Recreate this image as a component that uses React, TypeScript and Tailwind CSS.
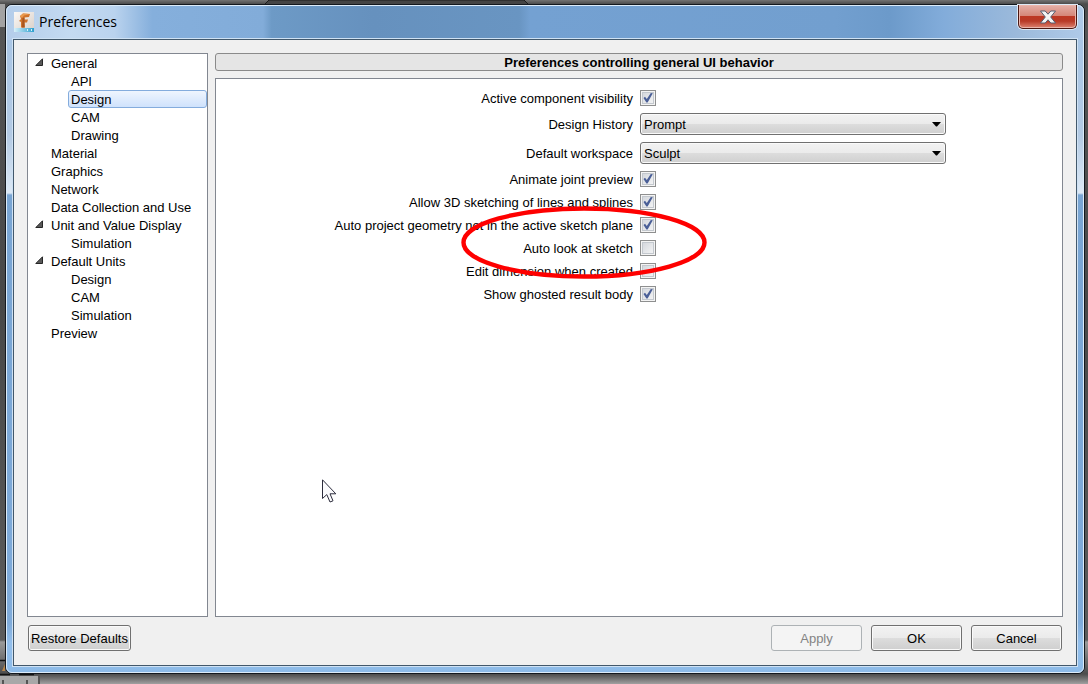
import { useState } from "react";
import clsx from "clsx";

interface TreeNode {
  id: string;
  label: string;
  level: 0 | 1;
  parent?: boolean;
}

interface CheckSetting {
  kind: "check";
  id: string;
  label: string;
  checked: boolean;
}

interface SelectSetting {
  kind: "select";
  id: string;
  label: string;
  options: string[];
}

const TREE: TreeNode[] = [
  { id: "general", label: "General", level: 0, parent: true },
  { id: "general-api", label: "API", level: 1 },
  { id: "general-design", label: "Design", level: 1 },
  { id: "general-cam", label: "CAM", level: 1 },
  { id: "general-drawing", label: "Drawing", level: 1 },
  { id: "material", label: "Material", level: 0 },
  { id: "graphics", label: "Graphics", level: 0 },
  { id: "network", label: "Network", level: 0 },
  { id: "data", label: "Data Collection and Use", level: 0 },
  { id: "display", label: "Unit and Value Display", level: 0, parent: true },
  { id: "display-simulation", label: "Simulation", level: 1 },
  { id: "units", label: "Default Units", level: 0, parent: true },
  { id: "units-design", label: "Design", level: 1 },
  { id: "units-cam", label: "CAM", level: 1 },
  { id: "units-simulation", label: "Simulation", level: 1 },
  { id: "preview", label: "Preview", level: 0 },
];

const SETTINGS: (CheckSetting | SelectSetting)[] = [
  { kind: "check", id: "visibility", label: "Active component visibility", checked: true },
  { kind: "select", id: "history", label: "Design History", options: ["Prompt"] },
  { kind: "select", id: "workspace", label: "Default workspace", options: ["Sculpt"] },
  { kind: "check", id: "joint", label: "Animate joint preview", checked: true },
  { kind: "check", id: "sketch3d", label: "Allow 3D sketching of lines and splines", checked: true },
  { kind: "check", id: "project", label: "Auto project geometry not in the active sketch plane", checked: true },
  { kind: "check", id: "look", label: "Auto look at sketch", checked: false },
  { kind: "check", id: "dimension", label: "Edit dimension when created", checked: false },
  { kind: "check", id: "ghosted", label: "Show ghosted result body", checked: true },
];

function AppLogo() {
  return (
    <svg width="20" height="20" viewBox="0 0 20 20" aria-hidden="true">
      <defs>
        <linearGradient id="logo-bg" x1="0" y1="0" x2="1" y2="1">
          <stop offset="0" stopColor="#fbf8f5" />
          <stop offset="1" stopColor="#d9cfc8" />
        </linearGradient>
        <linearGradient id="logo-bar" x1="0" y1="0" x2="1" y2="0">
          <stop offset="0" stopColor="#d8f0fa" />
          <stop offset="1" stopColor="#2d9fcd" />
        </linearGradient>
      </defs>
      <rect width="20" height="20" fill="url(#logo-bg)" />
      <path d="M6 4 L9 1.5 L16 2 L15 5 L10.5 5.5 L10.5 7.5 L14 7.5 L13 10.5 L10.5 10.5 L11 15.5 L7 15.5 L7 10 L5 9 L7 7 Z" fill="#d0732b" />
      <path d="M6 4 L9 1.5 L16 2 L10 3.5 L8 6 Z" fill="#e99a50" />
      <path d="M8.5 6 L10.5 5.5 L10.5 15.5 L8 15.5 Z" fill="#a9561f" />
      <rect y="16" width="20" height="4" fill="url(#logo-bar)" />
      <path d="M13.5 17v2M17.5 17v2" stroke="#d8f0fa" />
    </svg>
  );
}

function TitleBar() {
  return (
    <header className="flex h-8 items-start">
      <div className="flex flex-1 items-center gap-1 pl-0.5 pt-[6px]">
        <AppLogo />
        <h1 className="px-px font-['Open_Sans','Noto_Sans',sans-serif] text-[14px] leading-5 text-black">
          Preferences
        </h1>
      </div>
      <button
        type="button"
        aria-label="Close"
        className="-mt-px mr-px flex h-6 w-[59px] items-center justify-center rounded-b-[5px] border border-t-0 border-[#4c1813] bg-[linear-gradient(#e4b0a8_0%,#d58577_48%,#bd3723_50%,#b83a27_70%,#dd8472_100%)] shadow-[0_0_0_1px_#dce9f6,inset_0_0_0_1px_#eab5ab]"
      >
        <svg width="18" height="14" viewBox="0 0 18 14" aria-hidden="true">
          <path
            d="M1.5 1 H6.2 L9 4.2 L11.8 1 H16.5 L11.7 7 L16.5 13 H11.8 L9 9.8 L6.2 13 H1.5 L6.3 7 Z"
            fill="#f4f4f4"
            stroke="#565e72"
            strokeLinejoin="round"
          />
        </svg>
      </button>
    </header>
  );
}

function CategoryTree() {
  const [selected, setSelected] = useState("general-design");

  return (
    <nav className="w-[181px] shrink-0 border border-[#828790] bg-white">
      <ul>
        {TREE.map((node) => (
          <li key={node.id} className={clsx("flex h-[18px]", node.level === 1 && "pl-10")}>
            {node.level === 0 && (
              <span className="flex w-5 shrink-0 justify-end pr-[4px] pt-[4px]">
                {node.parent && (
                  <svg width="9" height="9" viewBox="0 0 9 9" aria-hidden="true">
                    <path d="M7.5 0.8 V7.5 H0.8 Z" fill="#595959" stroke="#262626" />
                  </svg>
                )}
              </span>
            )}
            <button
              type="button"
              onClick={() => setSelected(node.id)}
              className={clsx(
                "flex-1 whitespace-nowrap rounded-[3px] border px-[2px] pt-0.5 text-left leading-[14px]",
                node.id === selected
                  ? "border-[#84acdd] bg-linear-to-b from-[#eff5fe] to-[#cfe2fc]"
                  : "border-transparent"
              )}
            >
              {node.label}
            </button>
          </li>
        ))}
      </ul>
    </nav>
  );
}

function CheckField({ setting }: { setting: CheckSetting }) {
  const [checked, setChecked] = useState(setting.checked);

  return (
    <span className="grid size-4">
      <input
        id={setting.id}
        type="checkbox"
        checked={checked}
        onChange={() => setChecked(!checked)}
        className="col-start-1 row-start-1 size-4 appearance-none border border-[#8e8f8f] bg-linear-to-br from-[#cfd3d9] to-[#f8f8f8] shadow-[inset_0_0_0_1px_#f4f4f4,inset_0_0_0_2px_#c3c8ce]"
      />
      {checked && (
        <svg
          className="pointer-events-none col-start-1 row-start-1"
          width="16"
          height="16"
          viewBox="0 0 16 16"
          aria-hidden="true"
        >
          <path d="M3.5 8 L5 6.8 L6.8 9 L10.8 3 L12.8 3.2 L7.6 12.5 L6.4 12.5 Z" fill="#4a5f97" />
        </svg>
      )}
    </span>
  );
}

function SelectField({ setting }: { setting: SelectSetting }) {
  return (
    <span className="grid w-[306px]">
      <select
        id={setting.id}
        className="col-start-1 row-start-1 h-[22px] appearance-none rounded-[3px] border border-[#707070] bg-[linear-gradient(#f2f2f2_0%,#ebebeb_49%,#dddddd_50%,#cfcfcf_100%)] px-[3px] pt-0.5 leading-[18px] shadow-[inset_0_0_0_1px_#fafafa]"
      >
        {setting.options.map((option) => (
          <option key={option}>{option}</option>
        ))}
      </select>
      <svg
        className="pointer-events-none col-start-1 row-start-1 mr-[5px] self-center justify-self-end"
        width="9"
        height="5"
        viewBox="0 0 9 5"
        aria-hidden="true"
      >
        <path d="M0 0 H9 L5 4.5 H4 Z" fill="#000" />
      </svg>
    </span>
  );
}

function SettingsPanel() {
  return (
    <section className="relative flex-1 border border-[#828790] bg-white pt-[11px]">
      <div className="grid grid-cols-2 gap-y-[7px]">
        {SETTINGS.map((setting) => (
          <div key={setting.id} className="col-span-2 grid grid-cols-subgrid items-center">
            <label htmlFor={setting.id} className="pt-0.5 pr-1.5 text-right leading-[14px] whitespace-nowrap">
              {setting.label}
            </label>
            <div className="pl-px">
              {setting.kind === "check" ? <CheckField setting={setting} /> : <SelectField setting={setting} />}
            </div>
          </div>
        ))}
      </div>

      {/* hand-drawn mark around the sketch option */}
      <svg
        className="pointer-events-none absolute left-1/2 top-[127px] -ml-[178px]"
        width="246"
        height="74"
        viewBox="0 0 246 74"
        aria-hidden="true"
      >
        <ellipse cx="123" cy="36.5" rx="120.5" ry="34" fill="none" stroke="#fe0000" strokeWidth="4.4" />
      </svg>

      {/* mouse pointer */}
      <svg
        className="pointer-events-none absolute left-[106px] top-[400px]"
        width="16"
        height="25"
        viewBox="0 0 16 25"
        aria-hidden="true"
      >
        <path
          d="M0.5 0.8 V19.5 L4.8 15.6 L8 23 L11 21.8 L8 14.8 H13.8 Z"
          fill="#fbfbfd"
          stroke="#2c2c3c"
        />
      </svg>
    </section>
  );
}

const BUTTON =
  "h-[26px] rounded-[3px] border border-[#707070] bg-[linear-gradient(#f2f2f2_0%,#ebebeb_49%,#dddddd_50%,#cfcfcf_100%)] pt-0.5 shadow-[inset_0_0_0_1px_#fafafa]";

function Footer() {
  return (
    <footer className="flex gap-[9px] px-px">
      <button type="button" className={clsx(BUTTON, "mr-auto w-[103px] whitespace-nowrap")}>
        Restore Defaults
      </button>
      <button
        type="button"
        disabled
        className="h-[26px] w-[91px] rounded-[3px] border border-[#adb2b5] bg-[#f4f4f4] pt-0.5 text-[#838383]"
      >
        Apply
      </button>
      <button type="button" className={clsx(BUTTON, "w-[91px]")}>
        OK
      </button>
      <button type="button" className={clsx(BUTTON, "w-[91px]")}>
        Cancel
      </button>
    </footer>
  );
}

// bits of the application that show around the dialog
function Backdrop() {
  return (
    <>
      <svg className="absolute left-0 top-0" width="540" height="28" viewBox="0 0 540 28" aria-hidden="true">
        <rect y="4" width="5" height="23" fill="#a3a3a3" />
        <path d="M265 4 L269 0 H524 L528 4" fill="#444" stroke="#1c1c1c" />
      </svg>
      <svg className="absolute bottom-0 left-0" width="42" height="40" viewBox="0 0 42 40" aria-hidden="true">
        <path d="M0 16.5 H5 M0 30.5 H10 M19 30.5 H34" stroke="#111" strokeWidth="1.5" />
        <path d="M2 27 L5 20 V27 Z" fill="#b8864a" />
        <path d="M0 32 H39 V40 H0 Z" fill="#a8a8a8" />
        <path d="M3 36 V40 M27 36 V40 M39 31 V40" stroke="#555" strokeWidth="2" />
      </svg>
    </>
  );
}

export default function App() {
  return (
    <div className="relative flex min-h-screen flex-col bg-[linear-gradient(#737373_0px,#4b4b4b_4px,#555555_28px,#484848_300px,#5c5c5c_calc(100%_-_44px),#9a9a9a_calc(100%_-_42px),#4c4c4c_calc(100%_-_10px),#a0a0a0_100%)] pt-1 pr-[3px] pb-2.5 pl-[5px] font-['Liberation_Sans',Arial,sans-serif] text-[13px] text-black">
      <Backdrop />
      <div className="relative flex flex-1 flex-col rounded-[7px] border border-[#14191f] bg-[linear-gradient(#a5c4e6_0px,#b3cae4_130px,#dde9f5_188px,#79a5d3_190px,#7fabda_calc(100%_-_50px),#93bfec_calc(100%_-_30px),#8dbbe8_100%)]">
        <div className="flex flex-1 flex-col rounded-[6px] border border-[#dcebf8] bg-[linear-gradient(90deg,#b4cdea_0%,#c4daf1_6%,#bad3ee_10%,#85afdc_13.5%,#82acd9_23.8%,#6d9ac6_24.6%,#6691be_34%,#6995c2_47.6%,#74a1d2_48.6%,#729fcf_77%,#6c9aca_82%,#82acda_87%,#9cbadb_94%,#afcae8_100%)] bg-[length:100%_34px] bg-no-repeat px-[5px] pb-[5px]">
          <TitleBar />
          <main className="flex flex-1 flex-col border border-[#cfe2f4]">
            <div className="flex flex-1 flex-col gap-2 border border-[#42586b] bg-[#f0f0f0] px-[13px] pt-[13px] pb-[14px]">
              <div className="flex flex-1 gap-[7px]">
                <CategoryTree />
                <div className="flex flex-1 flex-col gap-[7px]">
                  <h2 className="h-[18px] rounded-[3px] border border-[#8a8a8a] bg-[#e5e5e5] pt-0.5 text-center font-bold leading-[14px]">
                    Preferences controlling general UI behavior
                  </h2>
                  <SettingsPanel />
                </div>
              </div>
              <Footer />
            </div>
          </main>
        </div>
      </div>
    </div>
  );
}
